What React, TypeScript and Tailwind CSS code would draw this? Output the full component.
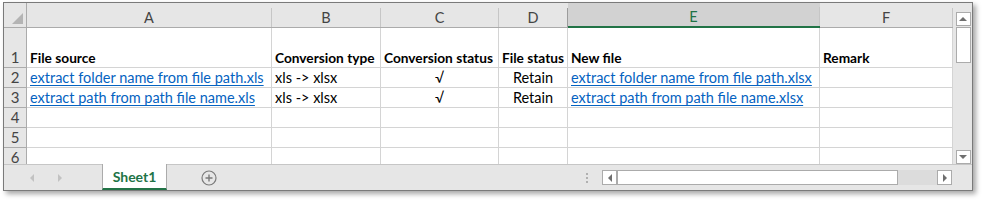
import type { ReactNode } from 'react';

const cols = ['A', 'B', 'C', 'D', 'E', 'F'];

type Cell = { text: string; kind?: 'bold' | 'link'; center?: boolean };

const rows: Cell[][] = [
  [
    { text: 'File source', kind: 'bold' },
    { text: 'Conversion type', kind: 'bold' },
    { text: 'Conversion status', kind: 'bold' },
    { text: 'File status', kind: 'bold' },
    { text: 'New file', kind: 'bold' },
    { text: 'Remark', kind: 'bold' },
  ],
  [
    { text: 'extract folder name from file path.xls', kind: 'link' },
    { text: 'xls -> xlsx' },
    { text: '√', center: true },
    { text: 'Retain', center: true },
    { text: 'extract folder name from file path.xlsx', kind: 'link' },
    { text: '' },
  ],
  [
    { text: 'extract path from path file name.xls', kind: 'link' },
    { text: 'xls -> xlsx' },
    { text: '√', center: true },
    { text: 'Retain', center: true },
    { text: 'extract path from path file name.xlsx', kind: 'link' },
    { text: '' },
  ],
  [{ text: '' }, { text: '' }, { text: '' }, { text: '' }, { text: '' }, { text: '' }],
  [{ text: '' }, { text: '' }, { text: '' }, { text: '' }, { text: '' }, { text: '' }],
  [{ text: '' }, { text: '' }, { text: '' }, { text: '' }, { text: '' }, { text: '' }],
];

const rowHeights = ['h-[40px]', 'h-[20px]', 'h-[20px]', 'h-[20px]', 'h-[20px]', 'h-[20px]'];

function Tri({ dir, className }: { dir: 'up' | 'down' | 'left' | 'right'; className?: string }) {
  const pts = {
    up: '0,5 4,1 8,5',
    down: '0,1 4,5 8,1',
    left: '5,0 1,4 5,8',
    right: '1,0 5,4 1,8',
  }[dir];
  const vb = dir === 'up' || dir === 'down' ? '0 0 8 6' : '0 0 6 8';
  const size = dir === 'up' || dir === 'down' ? 'w-[8px] h-[6px]' : 'w-[6px] h-[8px]';
  return (
    <svg viewBox={vb} className={`${size} ${className ?? ''}`}>
      <polygon points={pts} fill="currentColor" />
    </svg>
  );
}

function ScrollBtn({ children, className }: { children: ReactNode; className?: string }) {
  return (
    <div className={`flex items-center justify-center bg-white border border-[#ababab] text-[#6f6f6f] ${className ?? ''}`}>
      {children}
    </div>
  );
}

export default function App() {
  return (
    <div className="w-[982px] h-[201px] bg-white pt-[2px] pl-[3px] font-['Lato',sans-serif] text-[14.5px] text-black">
      <div className="w-[970px] h-[189px] border border-[#7a7a7a] bg-[#e6e6e6] flex flex-col shadow-[3px_3px_5px_rgba(0,0,0,0.35)]">
        {/* sheet + vertical scrollbar */}
        <div className="flex h-[161px]">
          <div className="w-[949px] h-[161px] grid grid-cols-[23px_245px_109px_118px_69px_252px_133px] content-start overflow-hidden">
            {/* corner */}
            <div className="h-[25px] bg-[#e6e6e6] border-r border-b border-[#ababab] flex items-end justify-end pr-[3px] pb-[3px]">
              <svg viewBox="0 0 11 11" className="w-[11px] h-[11px]">
                <polygon points="11,0 11,11 0,11" fill="#b4b4b4" />
              </svg>
            </div>
            {cols.map((c) => (
              <div
                key={c}
                className={`h-[25px] flex items-end ${c === 'E' ? 'bg-[#d2d2d2] border-b-2 border-[#217346] text-[#217346]' : 'bg-[#e6e6e6] border-b border-[#ababab] text-[#444]'}`}
              >
                <div className={`w-full h-[19px] flex items-center justify-center border-r ${c === 'D' ? 'border-[#9c9c9c]' : 'border-[#c6c6c6]'}`}>
                  {c}
                </div>
              </div>
            ))}
            {rows.map((r, i) => (
              <Row key={i} n={i + 1} cells={r} h={rowHeights[i]} />
            ))}
          </div>
          <div className="w-[19px] flex flex-col items-center pt-[9px] pl-[1px] bg-[#e6e6e6]">
            <ScrollBtn className="w-[15px] h-[14px]">
              <Tri dir="up" />
            </ScrollBtn>
            <div className="w-[15px] flex-1 flex flex-col pt-[1px]">
              <div className="h-[36px] bg-white border border-[#ababab]" />
            </div>
            <ScrollBtn className="w-[15px] h-[14px]">
              <Tri dir="down" />
            </ScrollBtn>
          </div>
        </div>
        {/* tab bar */}
        <div className="h-[26px] flex items-stretch border-t border-[#c6c6c6] bg-[#e6e6e6]">
          <div className="w-[98px] flex items-center gap-[22px] pl-[25px] text-[#c2c2c2]">
            <Tri dir="left" />
            <Tri dir="right" />
          </div>
          <div className="w-[65px] -mt-px bg-white border-x border-[#ababab] border-b-2 border-b-[#217346] flex items-center justify-center font-bold text-[14px] text-[#217346]">
            Sheet1
          </div>
          <div className="w-[84px] flex items-center justify-center">
            <svg viewBox="0 0 16 16" className="w-[16px] h-[16px]">
              <circle cx="8" cy="8" r="7" fill="none" stroke="#7a7a7a" strokeWidth="1.2" />
              <path d="M8 4.5v7M4.5 8h7" stroke="#7a7a7a" strokeWidth="1.4" />
            </svg>
          </div>
          <div className="w-[351px] flex items-center justify-end pr-[14px]">
            <div className="flex flex-col gap-[2px]">
              <span className="w-[2px] h-[2px] bg-[#b0b0b0]" />
              <span className="w-[2px] h-[2px] bg-[#b0b0b0]" />
              <span className="w-[2px] h-[2px] bg-[#b0b0b0]" />
            </div>
          </div>
          <div className="w-[350px] flex items-center">
            <div className="w-full h-[15px] flex bg-[#dcdcdc]">
              <ScrollBtn className="w-[15px] h-[15px]">
                <Tri dir="left" />
              </ScrollBtn>
              <div className="w-[281px] h-[15px] bg-white border border-[#ababab]" />
              <div className="flex-1" />
              <ScrollBtn className="w-[15px] h-[15px]">
                <Tri dir="right" />
              </ScrollBtn>
            </div>
          </div>
        </div>
      </div>
    </div>
  );
}

function Row({ n, cells, h }: { n: number; cells: Cell[]; h: string }) {
  return (
    <>
      <div className={`${h} bg-[#e6e6e6] border-r border-b border-[#ababab] text-[#444] text-[15px] flex items-end justify-center leading-[19px]`}>
        {n}
      </div>
      {cells.map((c, j) => (
        <div
          key={j}
          className={`${h} bg-white border-r border-b border-[#d4d4d4] flex items-end px-[3px] leading-[19px] whitespace-nowrap overflow-visible ${c.center ? 'justify-center' : ''}`}
        >
          {c.kind === 'link' ? (
            <span className="text-[#0563c1] underline underline-offset-[2px]">{c.text}</span>
          ) : c.kind === 'bold' ? (
            <span className="font-bold text-[13.7px]">{c.text}</span>
          ) : (
            <span>{c.text}</span>
          )}
        </div>
      ))}
    </>
  );
}
